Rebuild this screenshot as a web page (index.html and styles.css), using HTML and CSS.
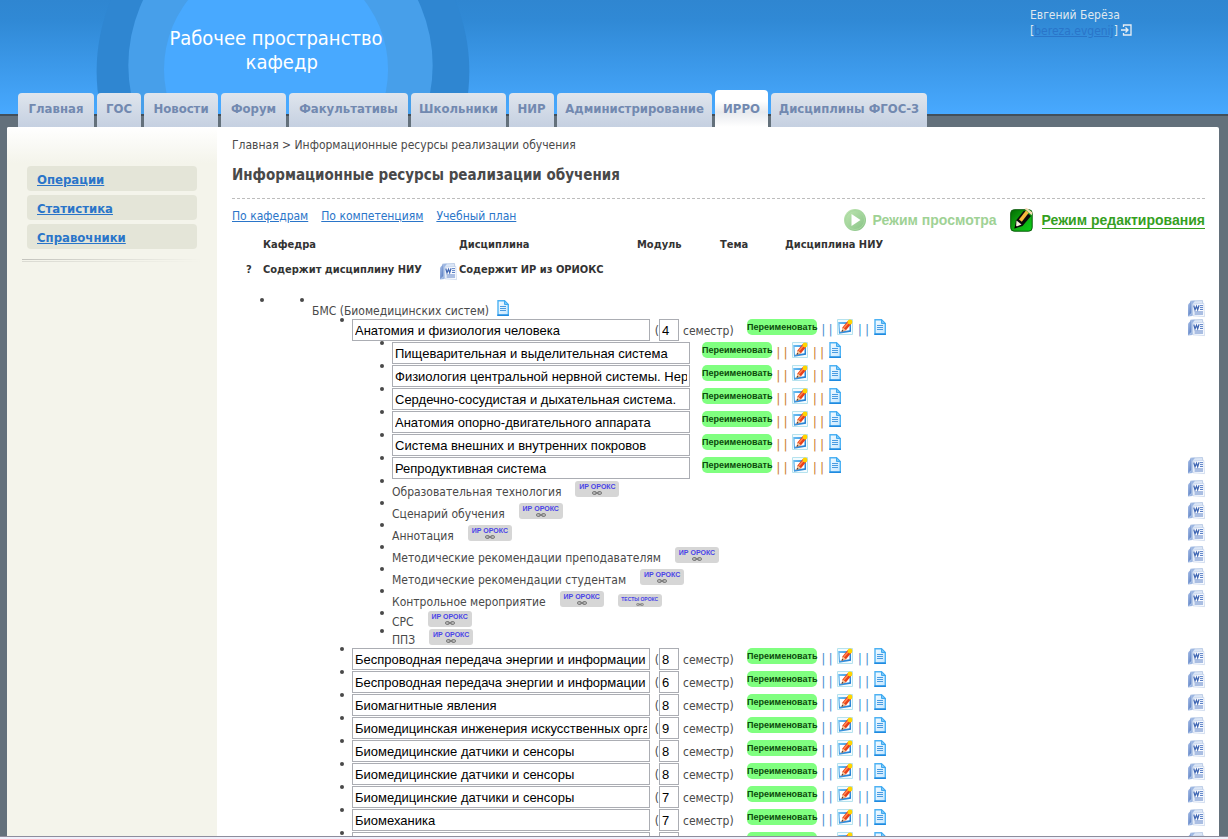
FILE: index.html
```html
<!DOCTYPE html>
<html lang="ru">
<head>
<meta charset="utf-8">
<title>Информационные ресурсы реализации обучения</title>
<link rel="stylesheet" href="styles.css">
</head>
<body>
<svg class="sprite" aria-hidden="true">
  <defs>
    <linearGradient id="g-frame" x1="0" y1="0" x2="1" y2="1"><stop offset="0" stop-color="#6cc0f4"/><stop offset="1" stop-color="#1673cc"/></linearGradient>
    <linearGradient id="g-page" x1="0" y1="0" x2="1" y2="1"><stop offset="0" stop-color="#f4fbff"/><stop offset="1" stop-color="#c4e6ff"/></linearGradient>
    <linearGradient id="g-play" x1="0" y1="0" x2="1" y2="1"><stop offset="0" stop-color="#c2e8b4"/><stop offset="1" stop-color="#85c184"/></linearGradient>
    <linearGradient id="g-green" x1="0" y1="0" x2="1" y2="1"><stop offset="0" stop-color="#006a00"/><stop offset=".5" stop-color="#12a812"/><stop offset="1" stop-color="#08d018"/></linearGradient>
    <linearGradient id="g-word" x1="0" y1="0" x2="1" y2="1"><stop offset="0" stop-color="#b4c8ec"/><stop offset="1" stop-color="#4a72bc"/></linearGradient>
  </defs>
  <symbol id="doc" viewBox="0 0 12 16">
    <path d="M1 .7h6.500l3.800 3.800v10.800H1z" fill="url(#g-page)" stroke="#4db2f4" stroke-width="1.400"/>
    <path d="M7.500 .7v3.800h3.800z" fill="#7cc8fa" stroke="#3fa9ef"/>
    <path d="M3 6.500h6M3 8.500h6M3 10.500h6" stroke="#4a9be0"/>
    <path d="M.4 15.200h11.400" stroke="#1f8ae0" stroke-width="1.600"/>
  </symbol>
  <symbol id="edit" viewBox="0 0 16 16">
    <path d="M.5.5h15v15H.5z" fill="#f2fbfe" stroke="#b5e2ee"/>
    <path d="M1.200 3h12.800v9.800L2 14.800z" fill="url(#g-frame)"/>
    <path d="M2.600 5h9.900v6.300l-9.600 1.500z" fill="#fff"/>
    <path d="M4.600 12.800l1-4.600L11 1.800l3.600 2.800-5.600 6.600z" fill="#e8401a"/>
    <path d="M7 8.800l5.200-6" stroke="#ff8a52" stroke-width="1.300"/>
    <path d="M4.600 12.800l1-4.600L9 11.200z" fill="#f3c79b"/>
    <path d="M4.600 12.800l.5-2 1.500 1.200z" fill="#333"/>
    <circle cx="13" cy="3" r="2.400" fill="#ffd400"/>
  </symbol>
  <symbol id="word" viewBox="0 0 18 18">
    <path d="M3.500 1L15.500.5l.8 13L5 15z" fill="#dbe6f6" stroke="#a9bfe0" stroke-width=".7"/>
    <path d="M1 4.500L4.500 1v12L1 16.500z" fill="url(#g-word)"/>
    <path d="M4.500 1L8 .8 5.500 4v12L1 16.500 4.500 13z" fill="#9db7e2"/>
    <path d="M6 4.200l10.800-.8.700 13.200L6 15.800z" fill="#fafcff" stroke="#b9cae6" stroke-width=".6"/>
    <path d="M6.800 5.500l1.200 4.300 1.500-3.600 1.200 3.600 1.400-4.500" fill="none" stroke="#3f66b2" stroke-width="1.200"/>
    <path d="M13 5.600h3M13 7.600h3M13 9.500h3M7.500 12h8.500M7.500 14h8.500" fill="none" stroke="#5b80c6"/>
  </symbol>
  <symbol id="chain" viewBox="0 0 10 4">
    <rect x=".5" y=".6" width="4" height="2.800" rx="1.300" fill="#bbb" stroke="#777"/>
    <rect x="5.500" y=".6" width="4" height="2.800" rx="1.300" fill="#bbb" stroke="#777"/>
    <path d="M3 2h4" stroke="#777"/>
  </symbol>
  <symbol id="exit" viewBox="0 0 11 12">
    <path d="M2.500 3V1h7.500v10H2.500V9M0 6h6.500M4.500 3.500L7 6 4.500 8.500" fill="none" stroke="#e8eef4" stroke-width="1.300"/>
  </symbol>
  <symbol id="play" viewBox="0 0 24 24">
    <circle cx="12" cy="12" r="11" fill="url(#g-play)"/>
    <circle cx="12" cy="12" r="9.500" fill="none" stroke="#a8d8a0"/>
    <path d="M8.500 6l9 6-9 6z" fill="#fff"/>
  </symbol>
  <symbol id="pencil" viewBox="0 0 24 24">
    <rect x=".7" y="1.700" width="21.500" height="21.500" rx="3.500" fill="url(#g-green)" stroke="#0a5a0a"/>
    <path d="M4.500 20.500l1.500-8L14 2.500l7 5.500-8.500 10z" fill="#0b0b0b"/>
    <path d="M9 11.500l7-9 2.800 2.200-7 9z" fill="#f6b73c"/>
    <path d="M14.500.8l2.300-.8 5.700 4.500-.8 2.800z" fill="#f3d9b0"/>
    <path d="M6.500 12.500l5 4-5.400 2.300z" fill="#f7efdc"/>
    <path d="M4.500 20.500l.8-3.300 2 1.700z" fill="#000"/>
  </symbol>
</svg>

<header class="header">
  <svg class="rings" width="400" height="115" viewBox="0 0 400 115" aria-hidden="true">
    <circle cx="203" cy="72" r="188" fill="#2f86d1"/>
    <circle cx="200.500" cy="66" r="153.500" fill="#479fea"/>
    <circle cx="196" cy="70" r="113" fill="#48a9ff"/>
  </svg>
  <div class="brand">Рабочее пространство<br>&nbsp;&nbsp;кафедр</div>
  <div class="user">
    <div>Евгений Берёза</div>
    <div>[<a href="#">bereza.evgenij</a>] <a href="#" aria-label="Выход"><svg width="11" height="12"><use href="#exit"/></svg></a></div>
  </div>
  <nav class="tabs">
    <a href="#">Главная</a><a href="#">ГОС</a><a href="#">Новости</a><a href="#">Форум</a><a href="#">Факультативы</a><a href="#">Школьники</a><a href="#">НИР</a><a href="#">Администрирование</a><a href="#" class="active">ИРРО</a><a href="#">Дисциплины ФГОС-3</a>
  </nav>
</header>

<div class="page">
  <aside class="sidebar">
    <nav class="menu">
      <a href="#">Операции</a>
      <a href="#">Статистика</a>
      <a href="#">Справочники</a>
    </nav>
    <div class="rule"></div>
  </aside>

  <main class="content">
    <div class="crumbs">Главная &gt; Информационные ресурсы реализации обучения</div>
    <h1>Информационные ресурсы реализации обучения</h1>
    <div class="toolbar">
      <nav class="views"><a href="#">По кафедрам</a><a href="#">По компетенциям</a><a href="#">Учебный план</a></nav>
      <div class="modes">
        <svg width="24" height="24"><use href="#play"/></svg><span class="mode-off">Режим просмотра</span>
        <svg width="24" height="24"><use href="#pencil"/></svg><a class="mode-on" href="#">Режим редактирования</a>
      </div>
    </div>
    <table class="legend">
      <colgroup><col class="c-mark"><col class="c-dept"><col class="c-icon"><col class="c-disc"><col class="c-mod"><col class="c-theme"><col></colgroup>
      <tr><td></td><th>Кафедра</th><td></td><th>Дисциплина</th><th>Модуль</th><th>Тема</th><th>Дисциплина НИУ</th></tr>
      <tr><th class="mark">?</th><th>Содержит дисциплину НИУ</th><td><svg width="18" height="18"><use href="#word"/></svg></td><th colspan="4">Содержит ИР из ОРИОКС</th></tr>
    </table>

    <ul class="tree">
      <li><ul class="branch">
        <li>
          <div class="row dept"><span>БМС (Биомедицинских систем)</span><svg class="doc" width="12" height="16"><use href="#doc"/></svg><svg class="word" width="18" height="18"><use href="#word"/></svg></div>
          <ul>
            <li>
              <div class="row course"><input class="name" aria-label="Дисциплина" value="Анатомия и физиология человека"><span class="open">(</span><input class="num" aria-label="Семестр" value="4"><span class="sem">семестр)</span><button>Переименовать</button><span class="sep">||</span><svg width="16" height="16"><use href="#edit"/></svg><span class="sep">||</span><svg class="doc" width="12" height="16"><use href="#doc"/></svg><svg class="word" width="18" height="18"><use href="#word"/></svg></div>
              <ul>
                <li class="row topic"><input class="name" aria-label="Тема" value="Пищеварительная и выделительная система"><button>Переименовать</button><span class="sep">||</span><svg width="16" height="16"><use href="#edit"/></svg><span class="sep">||</span><svg class="doc" width="12" height="16"><use href="#doc"/></svg></li>
                <li class="row topic"><input class="name" aria-label="Тема" value="Физиология центральной нервной системы. Нервная регуляция"><button>Переименовать</button><span class="sep">||</span><svg width="16" height="16"><use href="#edit"/></svg><span class="sep">||</span><svg class="doc" width="12" height="16"><use href="#doc"/></svg></li>
                <li class="row topic"><input class="name" aria-label="Тема" value="Сердечно-сосудистая и дыхательная система."><button>Переименовать</button><span class="sep">||</span><svg width="16" height="16"><use href="#edit"/></svg><span class="sep">||</span><svg class="doc" width="12" height="16"><use href="#doc"/></svg></li>
                <li class="row topic"><input class="name" aria-label="Тема" value="Анатомия опорно-двигательного аппарата"><button>Переименовать</button><span class="sep">||</span><svg width="16" height="16"><use href="#edit"/></svg><span class="sep">||</span><svg class="doc" width="12" height="16"><use href="#doc"/></svg></li>
                <li class="row topic"><input class="name" aria-label="Тема" value="Система внешних и внутренних покровов"><button>Переименовать</button><span class="sep">||</span><svg width="16" height="16"><use href="#edit"/></svg><span class="sep">||</span><svg class="doc" width="12" height="16"><use href="#doc"/></svg></li>
                <li class="row topic"><input class="name" aria-label="Тема" value="Репродуктивная система"><button>Переименовать</button><span class="sep">||</span><svg width="16" height="16"><use href="#edit"/></svg><span class="sep">||</span><svg class="doc" width="12" height="16"><use href="#doc"/></svg><svg class="word" width="18" height="18"><use href="#word"/></svg></li>
                <li class="row item"><span>Образовательная технология</span><a class="badge" href="#">ИР ОРОКС<svg width="10" height="4"><use href="#chain"/></svg></a><svg class="word" width="18" height="18"><use href="#word"/></svg></li>
                <li class="row item"><span>Сценарий обучения</span><a class="badge" href="#">ИР ОРОКС<svg width="10" height="4"><use href="#chain"/></svg></a><svg class="word" width="18" height="18"><use href="#word"/></svg></li>
                <li class="row item"><span>Аннотация</span><a class="badge" href="#">ИР ОРОКС<svg width="10" height="4"><use href="#chain"/></svg></a><svg class="word" width="18" height="18"><use href="#word"/></svg></li>
                <li class="row item"><span>Методические рекомендации преподавателям</span><a class="badge" href="#">ИР ОРОКС<svg width="10" height="4"><use href="#chain"/></svg></a><svg class="word" width="18" height="18"><use href="#word"/></svg></li>
                <li class="row item"><span>Методические рекомендации студентам</span><a class="badge" href="#">ИР ОРОКС<svg width="10" height="4"><use href="#chain"/></svg></a><svg class="word" width="18" height="18"><use href="#word"/></svg></li>
                <li class="row item"><span>Контрольное мероприятие</span><a class="badge" href="#">ИР ОРОКС<svg width="10" height="4"><use href="#chain"/></svg></a><a class="badge tests" href="#">ТЕСТЫ ОРОКС<svg width="8" height="3"><use href="#chain"/></svg></a><svg class="word" width="18" height="18"><use href="#word"/></svg></li>
                <li class="row item short"><span>СРС</span><a class="badge" href="#">ИР ОРОКС<svg width="10" height="4"><use href="#chain"/></svg></a></li>
                <li class="row item short"><span>ППЗ</span><a class="badge" href="#">ИР ОРОКС<svg width="10" height="4"><use href="#chain"/></svg></a></li>
              </ul>
            </li>
            <li class="row course"><input class="name" aria-label="Дисциплина" value="Беспроводная передача энергии и информации"><span class="open">(</span><input class="num" aria-label="Семестр" value="8"><span class="sem">семестр)</span><button>Переименовать</button><span class="sep">||</span><svg width="16" height="16"><use href="#edit"/></svg><span class="sep">||</span><svg class="doc" width="12" height="16"><use href="#doc"/></svg><svg class="word" width="18" height="18"><use href="#word"/></svg></li>
            <li class="row course"><input class="name" aria-label="Дисциплина" value="Беспроводная передача энергии и информации"><span class="open">(</span><input class="num" aria-label="Семестр" value="6"><span class="sem">семестр)</span><button>Переименовать</button><span class="sep">||</span><svg width="16" height="16"><use href="#edit"/></svg><span class="sep">||</span><svg class="doc" width="12" height="16"><use href="#doc"/></svg><svg class="word" width="18" height="18"><use href="#word"/></svg></li>
            <li class="row course"><input class="name" aria-label="Дисциплина" value="Биомагнитные явления"><span class="open">(</span><input class="num" aria-label="Семестр" value="8"><span class="sem">семестр)</span><button>Переименовать</button><span class="sep">||</span><svg width="16" height="16"><use href="#edit"/></svg><span class="sep">||</span><svg class="doc" width="12" height="16"><use href="#doc"/></svg><svg class="word" width="18" height="18"><use href="#word"/></svg></li>
            <li class="row course"><input class="name" aria-label="Дисциплина" value="Биомедицинская инженерия искусственных органов"><span class="open">(</span><input class="num" aria-label="Семестр" value="9"><span class="sem">семестр)</span><button>Переименовать</button><span class="sep">||</span><svg width="16" height="16"><use href="#edit"/></svg><span class="sep">||</span><svg class="doc" width="12" height="16"><use href="#doc"/></svg><svg class="word" width="18" height="18"><use href="#word"/></svg></li>
            <li class="row course"><input class="name" aria-label="Дисциплина" value="Биомедицинские датчики и сенсоры"><span class="open">(</span><input class="num" aria-label="Семестр" value="8"><span class="sem">семестр)</span><button>Переименовать</button><span class="sep">||</span><svg width="16" height="16"><use href="#edit"/></svg><span class="sep">||</span><svg class="doc" width="12" height="16"><use href="#doc"/></svg><svg class="word" width="18" height="18"><use href="#word"/></svg></li>
            <li class="row course"><input class="name" aria-label="Дисциплина" value="Биомедицинские датчики и сенсоры"><span class="open">(</span><input class="num" aria-label="Семестр" value="8"><span class="sem">семестр)</span><button>Переименовать</button><span class="sep">||</span><svg width="16" height="16"><use href="#edit"/></svg><span class="sep">||</span><svg class="doc" width="12" height="16"><use href="#doc"/></svg><svg class="word" width="18" height="18"><use href="#word"/></svg></li>
            <li class="row course"><input class="name" aria-label="Дисциплина" value="Биомедицинские датчики и сенсоры"><span class="open">(</span><input class="num" aria-label="Семестр" value="7"><span class="sem">семестр)</span><button>Переименовать</button><span class="sep">||</span><svg width="16" height="16"><use href="#edit"/></svg><span class="sep">||</span><svg class="doc" width="12" height="16"><use href="#doc"/></svg><svg class="word" width="18" height="18"><use href="#word"/></svg></li>
            <li class="row course"><input class="name" aria-label="Дисциплина" value="Биомеханика"><span class="open">(</span><input class="num" aria-label="Семестр" value="7"><span class="sem">семестр)</span><button>Переименовать</button><span class="sep">||</span><svg width="16" height="16"><use href="#edit"/></svg><span class="sep">||</span><svg class="doc" width="12" height="16"><use href="#doc"/></svg><svg class="word" width="18" height="18"><use href="#word"/></svg></li>
            <li class="row course"><input class="name" aria-label="Дисциплина"><span class="open"></span><input class="num" aria-label="Семестр"><span class="sem"></span><button aria-label="Переименовать"></button><span class="sep"></span><svg width="16" height="16"><use href="#edit"/></svg><span class="sep"></span><svg class="doc" width="12" height="16"><use href="#doc"/></svg><svg class="word" width="18" height="18"><use href="#word"/></svg></li>
          </ul>
        </li>
      </ul></li>
    </ul>
  </main>
</div>
<footer class="edge"></footer>
</body>
</html>
```

FILE: styles.css
```css
* { box-sizing: border-box; }

body {
  margin: 0;
  height: 100vh;
  overflow: hidden;
  display: flex;
  flex-direction: column;
  background: #63707b;
  color: #494949;
  font: 12px/16px "DejaVu Sans Condensed", "Noto Sans", sans-serif;
}

svg { display: block; flex: none; }
.sprite { position: absolute; width: 0; height: 0; }
a { color: #2a75c9; }
ul { list-style: none; margin: 0; padding: 0 0 0 40px; }

/* header */
.header {
  position: relative;
  flex: none;
  height: 127px;
  display: grid;
  grid-template: 1fr auto / 552px 1fr 198px;
  background: linear-gradient(#2f86d1 0, #3089d5 20px, #48a9ff 114px, #434f5a 114px, #434f5a 116px, #63707b 116px);
}
.rings { position: absolute; left: 80px; top: 0; height: 114px; }
.brand {
  position: relative;
  padding-top: 26px;
  text-align: center;
  color: #fff;
  font-size: 20px;
  line-height: 24px;
}
.user { grid-column: 3; padding-top: 7px; color: #dfe7ef; }
.user svg { display: inline-block; vertical-align: -1px; }
.tabs {
  position: relative;
  grid-column: 1 / 4;
  display: grid;
  grid-template-columns: 76px 44px 74px 65px 119px 95px 45px 155px 53px 156px;
  align-items: end;
  gap: 3px;
  padding-left: 18px;
}
.tabs a {
  height: 34px;
  padding-top: 8px;
  border-radius: 4px 4px 0 0;
  background: linear-gradient(#dfe5ed, #c5d0e1);
  color: #7289b0;
  font-weight: bold;
  font-size: 13px;
  text-align: center;
  text-decoration: none;
  white-space: nowrap;
}
.tabs .active { height: 37px; padding-top: 11px; background: linear-gradient(#fff, #fff 30%, #e8eaee 60%, #fff); }

/* page */
.page { flex: 1; min-height: 0; display: flex; margin: 0 9px 0 7px; background: #fff; border-radius: 2px 2px 0 0; overflow: hidden; }
.sidebar { flex: none; width: 210px; padding: 39px 15px 0; background: linear-gradient(#fff, #f4f4eb 36px); }
.menu { display: grid; gap: 4px; padding: 0 5px; }
.menu a {
  height: 25px;
  padding: 6px 10px 0;
  border-radius: 4px;
  background: #e4e5d8;
  font-size: 13px;
  font-weight: bold;
}
.rule {
  height: 3px;
  margin-top: 10px;
  background: linear-gradient(90deg, transparent, #f4f4eb), linear-gradient(#c4c4be 1px, #f4f4eb 1px, #f4f4eb 2px, #dadad2 2px);
}

.content { flex: 1; min-width: 0; padding: 10px 14px 0 15px; }
h1 { margin: 0; padding: 12px 0 13px; border-bottom: 1px dashed #bdbdbd; font-size: 15px; line-height: 20px; }
.toolbar { display: flex; justify-content: space-between; align-items: flex-start; padding-top: 9px; height: 34px; }
.views { display: flex; gap: 13px; }
.modes {
  display: flex;
  align-items: center;
  font: bold 14px/16px "Liberation Sans", Arial, sans-serif;
}
.mode-off { margin: 0 13px 0 5px; color: #9fd295; }
.mode-on { margin-left: 8px; color: #35a01f; border-bottom: 1px solid; text-decoration: none; }

.legend { width: 100%; border-collapse: collapse; table-layout: fixed; font-size: 11px; color: #333; }
.legend td, .legend th { padding: 0 0 2px; height: 25px; text-align: left; vertical-align: middle; }
.legend .mark { padding-left: 14px; }
.legend svg { margin-top: 5px; }
.c-mark { width: 31px; }
.c-dept { width: 176px; }
.c-icon { width: 20px; }
.c-disc { width: 178px; }
.c-mod { width: 83px; }
.c-theme { width: 65px; }

/* tree */
.tree > li::before, .row::before {
  content: "";
  flex: none;
  width: 4px;
  height: 4px;
  margin: -1px 8px 0 -12px;
  border-radius: 50%;
  background: #494949;
}
.tree { padding-top: 16px; }
.tree > li { display: flex; }
.branch { flex: 1; }
.row { display: flex; align-items: flex-start; height: 23px; white-space: nowrap; }
.dept { height: 20px; line-height: 24px; }
.dept .doc { margin: 1px 0 0 8px; }
.dept .word { margin-top: 1px; }
.word { margin-left: auto; }

input {
  height: 22px;
  padding: 0 2px;
  border: 1px solid #abadb3;
  background: #fff;
  color: #000;
  font: 13px "Liberation Sans", Arial, sans-serif;
}
.name { width: 298px; }
.num { width: 20px; }
.open, .sem { line-height: 24px; }
.open { width: 9px; text-align: right; }
.sem { width: 68px; padding-left: 4px; }
button {
  width: 70px;
  height: 16px;
  padding: 0;
  border: 0;
  border-radius: 5px;
  background: #80ff80;
  color: #0c4a0c;
  font: bold 9px/16px "Liberation Sans", Arial, sans-serif;
}
.topic button { margin-left: 12px; }
.sep {
  width: 20px;
  padding-top: 4px;
  text-align: center;
  color: #4a8fd0;
  font: 12px/14px "DejaVu Sans Mono", monospace;
}
.topic .sep { color: #cc8030; }
.row svg + .sep { width: 21px; }

.item { height: 22px; line-height: 24px; }
.short { height: 18px; line-height: 20px; }
.badge {
  display: flex;
  flex-direction: column;
  align-items: center;
  width: 44px;
  height: 16px;
  margin: 1px 0 0 14px;
  padding-top: 2px;
  border-radius: 3px;
  background: #d6d6d6;
  color: #4a44e8;
  font: bold 7px/8px "Liberation Sans", Arial, sans-serif;
  text-decoration: none;
}
.tests { height: 13px; margin-top: 4px; font-size: 5px; line-height: 7px; }
.short .badge { margin-top: -1px; }

.edge { flex: none; height: 3px; border-top: 1px solid #8d8d9c; background: #f0effb; }
```
